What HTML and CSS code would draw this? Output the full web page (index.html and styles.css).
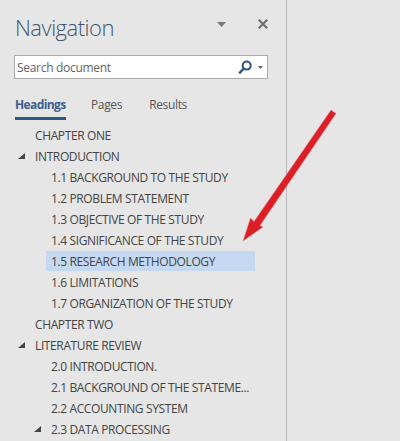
FILE: index.html
```html
<!DOCTYPE html>
<html lang="en">
<head>
<meta charset="utf-8">
<title>Navigation</title>
<link rel="stylesheet" href="styles.css">
</head>
<body>
<aside class="pane">
  <header class="pane-head">
    <h1 class="pane-title">Navigation</h1>
    <svg class="pane-menu" width="9" height="5" viewBox="0 0 9 5"><path d="M0 0H9L4.500 5Z" fill="#7a7a7a"/></svg>
    <svg class="pane-close" width="10" height="10" viewBox="0 0 10 10"><path d="M.8 .8L9.200 9.200M9.200 .8L.8 9.200" stroke="#6f6f6f" stroke-width="2.200" fill="none"/></svg>
  </header>
  <div class="search">
    <span class="search-text">Search document</span>
    <svg class="search-icon" width="14" height="15" viewBox="0 0 14 15"><circle cx="8.700" cy="5.600" r="4" fill="none" stroke="#2b5487" stroke-width="2"/><path d="M5.800 8.500L1.200 13.300" stroke="#2b5487" stroke-width="2.400" fill="none"/></svg>
    <svg class="search-caret" width="5" height="3" viewBox="0 0 5 3"><path d="M0 0H5L2.500 3Z" fill="#666"/></svg>
  </div>
  <nav class="tabs">
    <span class="tab tab-active">Headings</span>
    <span class="tab tab-pages">Pages</span>
    <span class="tab tab-results">Results</span>
  </nav>
  <ul class="tree">
    <li class="row lvl1"><span class="twisty"></span>CHAPTER ONE</li>
    <li class="row lvl1"><span class="twisty"><svg width="7" height="7" viewBox="0 0 7 7"><path d="M7 0V6H0Z" fill="#444"/></svg></span>INTRODUCTION</li>
    <li class="row lvl2"><span class="twisty"></span>1.1 BACKGROUND TO THE STUDY</li>
    <li class="row lvl2"><span class="twisty"></span>1.2 PROBLEM STATEMENT</li>
    <li class="row lvl2"><span class="twisty"></span>1.3 OBJECTIVE OF THE STUDY</li>
    <li class="row lvl2"><span class="twisty"></span>1.4 SIGNIFICANCE OF THE STUDY</li>
    <li class="row lvl2 selected"><span class="twisty"></span>1.5 RESEARCH METHODOLOGY</li>
    <li class="row lvl2"><span class="twisty"></span>1.6 LIMITATIONS</li>
    <li class="row lvl2"><span class="twisty"></span>1.7 ORGANIZATION OF THE STUDY</li>
    <li class="row lvl1"><span class="twisty"></span>CHAPTER TWO</li>
    <li class="row lvl1"><span class="twisty"><svg width="7" height="7" viewBox="0 0 7 7"><path d="M7 0V6H0Z" fill="#444"/></svg></span>LITERATURE REVIEW</li>
    <li class="row lvl2"><span class="twisty"></span>2.0 INTRODUCTION.</li>
    <li class="row lvl2"><span class="twisty"></span>2.1 BACKGROUND OF THE STATEME...</li>
    <li class="row lvl2"><span class="twisty"></span>2.2 ACCOUNTING SYSTEM</li>
    <li class="row lvl2"><span class="twisty"><svg width="7" height="7" viewBox="0 0 7 7"><path d="M7 0V6H0Z" fill="#444"/></svg></span>2.3 DATA PROCESSING</li>
  </ul>
</aside>
<svg class="arrow" width="100" height="140" viewBox="0 0 100 140"><path d="M91 1L96 4.500L20 116.500L23 118L3 132L10.500 109L14 112.500Z" fill="#dc1f26" stroke="#ee8a8a" stroke-width="0.500"/></svg>
</body>
</html>
```

FILE: styles.css
```css
html, body {
  margin: 0;
  height: 441px;
  overflow: hidden;
  background: #e6e6e6;
}
body {
  position: relative;
  font-family: "Open Sans", "Noto Sans", sans-serif;
  color: #444;
}
.pane {
  width: 287px;
  height: 441px;
  box-sizing: border-box;
  border-right: 1px solid #b9b9b9;
  padding-top: 12px;
  overflow: hidden;
}
.pane-head {
  display: flex;
  align-items: flex-start;
  height: 43px;
  padding-left: 15px;
}
.pane-title {
  margin: 0;
  width: 202px;
  font-size: 22px;
  font-weight: 300;
  line-height: 30px;
  letter-spacing: -0.5px;
  color: #3f5571;
}
.pane-menu { margin-top: 10px; }
.pane-close { margin: 7px 0 0 32px; }
.search {
  display: flex;
  align-items: center;
  box-sizing: border-box;
  width: 254px;
  height: 24px;
  margin-left: 14px;
  padding: 0 4px 0 2px;
  background: #fff;
  border: 1px solid #ababab;
}
.search-text {
  flex: 1;
  font-size: 12px;
  letter-spacing: -0.3px;
  color: #666;
}
.search-caret { margin-left: 6px; }
.tabs {
  display: flex;
  height: 39px;
  margin: 14px 0 0 15px;
  font-size: 12px;
  line-height: 24px;
  color: #555;
}
.tab { height: 24px; }
.tab-active {
  width: 51px;
  font-weight: 700;
  letter-spacing: -0.6px;
  color: #3d5f8f;
  box-shadow: 0 3px 0 #2f5586;
}
.tab-pages { margin-left: 25px; letter-spacing: -0.35px; }
.tab-results { margin-left: 27px; letter-spacing: -0.35px; }
.tree {
  list-style: none;
  margin: 0;
  padding: 0;
  margin-top: -7px;
}
.row {
  display: flex;
  align-items: center;
  height: 21px;
  font-size: 12px;
  letter-spacing: -0.38px;
  white-space: nowrap;
  color: #444;
}
.lvl1 { padding-left: 18px; }
.lvl2 { padding-left: 34px; }
.twisty {
  display: flex;
  align-items: center;
  width: 17px;
  height: 21px;
}
.selected {
  position: relative;
  z-index: 0;
}
.selected::before {
  content: "";
  position: absolute;
  z-index: -1;
  left: 46px;
  top: 0;
  width: 209px;
  height: 20px;
  background: #c5d8f2;
}
.arrow {
  position: absolute;
  left: 240px;
  top: 109px;
}
```
